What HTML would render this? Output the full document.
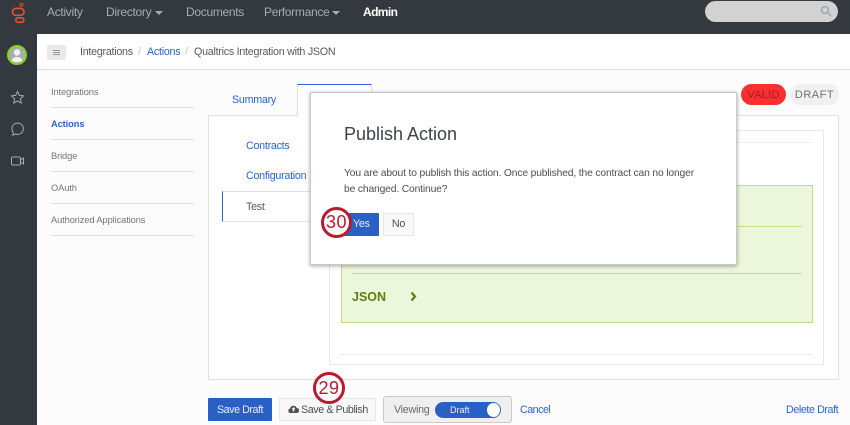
<!DOCTYPE html>
<html><head><meta charset="utf-8">
<style>
html,body{margin:0;padding:0;width:850px;height:425px;overflow:hidden;background:#fcfcfc;font-family:"Liberation Sans",sans-serif;color:#444a50}
div,span,a{position:absolute;box-sizing:border-box;white-space:nowrap}
svg{position:absolute}
.nav{color:#a7adb3;font-size:12px;top:5px;line-height:14px;letter-spacing:-.3px}
.caret{width:0;height:0;border-left:4px solid transparent;border-right:4px solid transparent;border-top:4px solid #a7adb3;top:11px}
.side{font-size:9.300px;left:51px;color:#70757a;line-height:11px;letter-spacing:-.1px}
.hr{left:51px;width:143px;height:1px;background:#dcdee0}
.blue{color:#2a62cf}
.t{font-size:10.700px;line-height:14px;letter-spacing:-.25px}
.num{border:3px solid #bb1a2e;background:#fff;border-radius:50%;color:#bb1a2e;text-align:center;font-size:18px;letter-spacing:.5px}
</style></head><body>
<div style="left:0;top:0;width:850px;height:34px;background:#33393e"></div>
<div style="left:0;top:0;width:37px;height:425px;background:#33393e"></div>
<div style="left:37px;top:34px;width:813px;height:36px;background:#fff;border-bottom:1px solid #dcdddf"></div>

<svg style="left:11px;top:2px" width="16" height="22" viewBox="0 0 16 22" fill="none" stroke="#e8502a" stroke-width="1.600"><circle cx="10.500" cy="2.700" r="1.500" stroke-width="1"/><rect x="1.500" y="6.300" width="11.500" height="7" rx="3.500"/><rect x="4.800" y="15.800" width="8" height="4.500" rx="2.200"/></svg>
<span class="nav" style="left:47px">Activity</span>
<span class="nav" style="left:106px">Directory</span><div class="caret" style="left:155px"></div>
<span class="nav" style="left:186px">Documents</span>
<span class="nav" style="left:264px">Performance</span><div class="caret" style="left:332px"></div>
<span class="nav" style="left:363px;color:#fff;font-weight:bold;letter-spacing:-.6px">Admin</span>
<div style="left:705px;top:1px;width:133px;height:21px;border-radius:11px;background:#d2d2d2"></div>
<svg style="left:820px;top:5px" width="12" height="12" viewBox="0 0 12 12" fill="none" stroke="#a3adb8" stroke-width="1.700"><circle cx="5" cy="5" r="3.400"/><path d="M7.500 7.500l3.500 3.500"/></svg>

<svg style="left:7px;top:45px" width="21" height="21" viewBox="0 0 21 21"><circle cx="10" cy="10" r="9" fill="#a9acad" stroke="#7fd321" stroke-width="2"/><circle cx="10" cy="7.500" r="3.200" fill="#f1f1f1"/><path d="M4.500 15.500c1-3 3-3.500 5.500-3.500s4.500.5 5.500 3.500a9 9 0 0 1-11 0z" fill="#f1f1f1"/></svg>
<svg style="left:10px;top:90px" width="15" height="15" viewBox="0 0 15 15" fill="none" stroke="#a7adb3" stroke-width="1"><path d="M7.500 1.500l1.800 3.900 4.200.5-3.100 2.900.8 4.200-3.700-2.100-3.700 2.100.8-4.200L1.500 5.900l4.200-.5z"/></svg>
<svg style="left:10px;top:122px" width="15" height="15" viewBox="0 0 15 15" fill="none" stroke="#a7adb3" stroke-width="1"><path d="M2.500 13c.8-1 1-1.800.7-2.700A5.700 5.700 0 1 1 5.500 12c-1 .7-2 1-3 1z"/></svg>
<svg style="left:10px;top:154px" width="15" height="14" viewBox="0 0 15 14" fill="none" stroke="#a7adb3" stroke-width="1"><rect x="1.500" y="3" width="9" height="8" rx="1.500"/><path d="M10.500 6l3-2v6l-3-2"/></svg>

<div style="left:47px;top:45px;width:19px;height:15px;background:#e9e9e9;border-radius:2px"></div>
<div style="left:53px;top:50px;width:7px;height:1px;background:#999;box-shadow:0 2px 0 #999,0 4px 0 #999"></div>
<span class="t" style="left:80px;top:45px;color:#555a5f">Integrations</span>
<span class="t" style="left:138px;top:45px;color:#c2c5c8">/</span>
<span class="t blue" style="left:147px;top:45px">Actions</span>
<span class="t" style="left:185px;top:45px;color:#c2c5c8">/</span>
<span class="t" style="left:194px;top:45px;color:#555a5f">Qualtrics Integration with JSON</span>

<span class="side" style="top:87px">Integrations</span><div class="hr" style="top:107px"></div>
<span class="side blue" style="top:119px;font-weight:bold;color:#2a62cf">Actions</span><div class="hr" style="top:139px"></div>
<span class="side" style="top:151px">Bridge</span><div class="hr" style="top:171px"></div>
<span class="side" style="top:183px">OAuth</span><div class="hr" style="top:203px"></div>
<span class="side" style="top:215px">Authorized Applications</span><div class="hr" style="top:235px"></div>

<div style="left:208px;top:115px;width:631px;height:265px;background:#fff;border:1px solid #dfe0e1"></div>
<div style="left:297px;top:84px;width:75px;height:33px;background:#fff;border-top:1px solid #2a62cf;border-right:1px solid #dfe0e1;border-left:1px solid #dfe0e1"></div>
<span class="t blue" style="left:232px;top:93px">Summary</span>

<div style="left:329px;top:130px;width:495px;height:235px;background:#fff;border:1px solid #e7e8e9"></div>
<div style="left:340px;top:142px;width:472px;height:1px;background:#f0f0f0"></div>
<div style="left:341px;top:185px;width:472px;height:138px;background:#ebf6da;border:1px solid #c2dc7b"></div>
<div style="left:352px;top:226px;width:450px;height:1px;background:#c6de80"></div>
<div style="left:352px;top:273px;width:450px;height:1px;background:#c6de80"></div>
<span style="left:352px;top:290px;font-size:12.500px;line-height:15px;font-weight:bold;color:#5f7f10">JSON</span>
<svg style="left:409px;top:291px" width="9" height="11" viewBox="0 0 9 11" fill="none" stroke="#5f7f10" stroke-width="2.200"><path d="M2.500 1.500l3.500 4-3.500 4"/></svg>
<div style="left:340px;top:354px;width:472px;height:1px;background:#f0f0f0"></div>

<span class="t blue" style="left:246px;top:139px">Contracts</span>
<span class="t blue" style="left:246px;top:169px">Configuration</span>
<div style="left:222px;top:191px;width:90px;height:31px;background:#fff;border-left:1px solid #2a62cf;border-bottom:1px solid #e3e4e5;border-top:1px solid #e3e4e5"></div>
<span class="t" style="left:246px;top:200px;color:#555a5f">Test</span>

<div style="left:741px;top:84px;width:45px;height:21px;border-radius:11px;background:#f92f30;color:#a51d22;font-size:11px;line-height:22px;text-align:center;letter-spacing:.3px">VALID</div>
<div style="left:790px;top:84px;width:49px;height:21px;border-radius:11px;background:#f0f0f0;color:#6d7175;font-size:11px;line-height:22px;text-align:center;letter-spacing:.5px">DRAFT</div>

<div style="left:310px;top:92px;width:427px;height:173px;background:#fff;border:1px solid #c8c9c9;box-shadow:0 1px 4px rgba(0,0,0,.35)"></div>
<span style="left:344px;top:124px;font-size:18px;line-height:20px;color:#3d4348">Publish Action</span>
<span style="left:344px;top:166px;font-size:10.300px;line-height:15.500px;color:#4a4f54;letter-spacing:-.15px">You are about to publish this action. Once published, the contract can no longer<br>be changed. Continue?</span>
<div class="t" style="left:340px;top:213px;width:39px;height:23px;background:#2a5fc6;border-radius:1px;color:#e9eefa;line-height:23px;padding-left:13px">Yes</div>
<div class="t" style="left:383px;top:213px;width:31px;height:23px;background:#f8f8f8;border:1px solid #e6e6e6;color:#4a4f54;line-height:21px;text-align:center">No</div>
<div class="num" style="left:321px;top:207px;width:31px;height:31px;line-height:25px">30</div>

<div class="t" style="left:208px;top:398px;width:64px;height:23px;background:#2a5fc6;border-radius:1px;color:#e9eefa;line-height:24px;text-align:center;letter-spacing:-.45px">Save Draft</div>
<div style="left:279px;top:398px;width:97px;height:23px;background:#f8f8f8;border:1px solid #e6e6e6"></div>
<svg style="left:288px;top:404px" width="11" height="10" viewBox="0 0 11 10"><path d="M2.500 9A2.300 2.300 0 0 1 2 4.500 3.500 3.500 0 0 1 8.700 4 2.500 2.500 0 0 1 8.500 9z" fill="#4a4f54"/><path d="M5.500 3l2 2.200H6.300V7.500H4.700V5.200H3.500z" fill="#f8f8f8"/></svg>
<span class="t" style="left:301px;top:403px;color:#4a4f54;letter-spacing:-.4px">Save &amp; Publish</span>
<div class="num" style="left:313px;top:372px;width:32px;height:32px;line-height:26px">29</div>

<div style="left:383px;top:396px;width:129px;height:27px;background:#efefef;border:1px solid #c9cacb;border-radius:3px"></div>
<span class="t" style="left:394px;top:403px;color:#666b70">Viewing</span>
<div style="left:435px;top:402px;width:66px;height:16px;border-radius:8px;background:#2a5fc6;color:#e9eefa;font-size:9px;line-height:16px;padding-left:15px">Draft</div>
<div style="left:487px;top:403px;width:13px;height:14px;border-radius:50%;background:#fff"></div>
<span class="t blue" style="left:520px;top:403px;letter-spacing:-.5px">Cancel</span>
<span class="t blue" style="left:786px;top:403px;letter-spacing:-.4px">Delete Draft</span>
</body></html>
